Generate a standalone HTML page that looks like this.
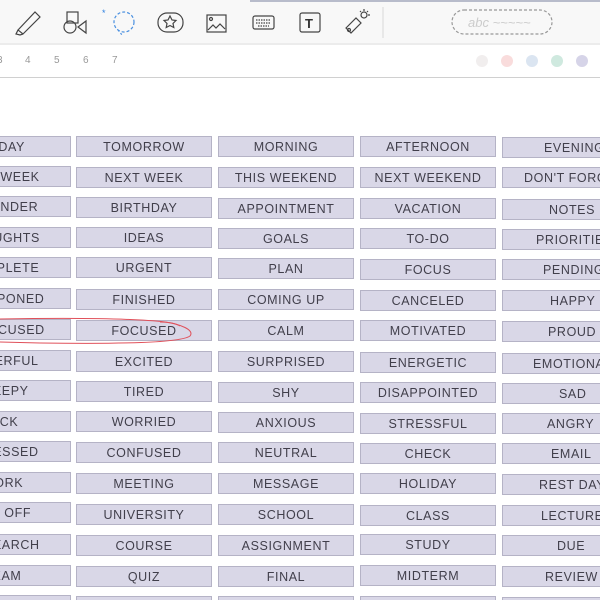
<!DOCTYPE html>
<html><head><meta charset="utf-8"><style>
html,body{margin:0;width:600px;height:600px;overflow:hidden}
body{background:#fff;font-family:"Liberation Sans",sans-serif}
#w{position:relative;width:600px;height:600px;overflow:hidden}
.tb{position:absolute;left:0;top:0;width:600px;height:43px;background:#f8f8f8;border-bottom:2px solid #ececec}
.topline{position:absolute;left:250px;top:0;width:350px;height:2px;background:#b8bccb}
.bar2{position:absolute;left:0;top:45px;width:600px;height:32px;background:#fff;border-bottom:1px solid #d0d0d0}
.num{position:absolute;top:55px;font-size:10px;color:#999}
.dot{position:absolute;top:55px;width:12px;height:12px;border-radius:50%}
.s{position:absolute;height:21px;width:134px;background:#d9d7e7;border:1px solid #b5b3c6;box-sizing:border-box;text-align:center;font-size:12.5px;line-height:20px;color:#413f4b;letter-spacing:0.6px;white-space:nowrap;overflow:hidden}
.c1{left:-66px;width:137px}.c2{left:76px;width:136px}.c3{left:218px;width:136px}.c4{left:360px;width:136px}.c5{left:502px;width:98px;border-right:none;text-align:left}
svg{position:absolute}
</style></head><body><div id="w">
<div class="tb"></div><div class="topline"></div>
<svg width="600" height="45" style="left:0;top:0" fill="none" stroke="#444" stroke-width="1.2">
<path d="M18 30 L35 12 L40 17 L23 34 Z M18 30 L16 34 L20 35 L23 34"/>
<rect x="67" y="12" width="11" height="11"/><circle cx="70" cy="27" r="6"/><path d="M86 21 L86 33 L78 27 Z"/>
<text x="102" y="16" font-size="9" fill="#2a7fe0" stroke="none">*</text><circle cx="124" cy="22" r="10" stroke="#4a90e0" stroke-dasharray="3 2"/><path d="M118 30 L122 35" stroke="#4a90e0" stroke-dasharray="2 2"/>
<rect x="158" y="13" width="25" height="19" rx="9"/><path d="M170 16 l2 4 4 .5 -3 3 .8 4 -3.8 -2 -3.8 2 .8 -4 -3 -3 4 -.5z"/>
<rect x="207" y="15" width="19" height="17"/><circle cx="211" cy="19" r="1.5"/><path d="M208 30 l5 -5 3 3 4 -4 5 5"/>
<rect x="253" y="16" width="21" height="13" rx="2"/><path d="M256 20h15M256 23h15M258 26h11" stroke-dasharray="1.5 1"/>
<rect x="300" y="13" width="20" height="19" rx="2"/><text x="305" y="28" font-size="13" font-weight="bold" fill="#333" stroke="none">T</text>
<path d="M346 28 l10 -10 5 5 -10 10 z"/><circle cx="349" cy="30" r="1.5"/><circle cx="364" cy="15" r="3"/><path d="M364 9v2M370 15h-2M368 11l-1 1M360 11l1 1"/>
<line x1="383" y1="7" x2="383" y2="38" stroke="#ddd"/>
<rect x="452" y="10" width="100" height="24" rx="12" stroke="#999" stroke-dasharray="3 2"/>
<text x="468" y="27" font-size="13" font-style="italic" fill="#ccc" stroke="none">abc ~~~~~</text>
</svg>
<div class="bar2"></div>
<span class="num" style="left:-3px">3</span><span class="num" style="left:25px">4</span><span class="num" style="left:54px">5</span><span class="num" style="left:83px">6</span><span class="num" style="left:112px">7</span>
<div class="dot" style="left:476px;background:#f1eeee"></div><div class="dot" style="left:501px;background:#f9dcdc"></div><div class="dot" style="left:526px;background:#dbe5f1"></div><div class="dot" style="left:551px;background:#cfe9df"></div><div class="dot" style="left:576px;background:#d6d4e8"></div>

<div class="s c1" style="top:136px">TODAY</div><div class="s c2" style="top:136px">TOMORROW</div><div class="s c3" style="top:136px">MORNING</div><div class="s c4" style="top:136px">AFTERNOON</div><div class="s c5" style="top:137px;padding-left:41px">EVENING</div>
<div class="s c1" style="top:166px">THIS WEEK</div><div class="s c2" style="top:167px">NEXT WEEK</div><div class="s c3" style="top:167px">THIS WEEKEND</div><div class="s c4" style="top:167px">NEXT WEEKEND</div><div class="s c5" style="top:167px;padding-left:21px">DON'T FORGET</div>
<div class="s c1" style="top:196px">REMINDER</div><div class="s c2" style="top:197px">BIRTHDAY</div><div class="s c3" style="top:198px">APPOINTMENT</div><div class="s c4" style="top:198px">VACATION</div><div class="s c5" style="top:199px;padding-left:46px">NOTES</div>
<div class="s c1" style="top:227px">THOUGHTS</div><div class="s c2" style="top:227px">IDEAS</div><div class="s c3" style="top:228px">GOALS</div><div class="s c4" style="top:228px">TO-DO</div><div class="s c5" style="top:229px;padding-left:33px">PRIORITIES</div>
<div class="s c1" style="top:257px">COMPLETE</div><div class="s c2" style="top:257px">URGENT</div><div class="s c3" style="top:258px">PLAN</div><div class="s c4" style="top:259px">FOCUS</div><div class="s c5" style="top:259px;padding-left:40px">PENDING</div>
<div class="s c1" style="top:288px">POSTPONED</div><div class="s c2" style="top:289px">FINISHED</div><div class="s c3" style="top:289px">COMING UP</div><div class="s c4" style="top:290px">CANCELED</div><div class="s c5" style="top:290px;padding-left:47px">HAPPY</div>
<div class="s c1" style="top:319px">UNFOCUSED</div><div class="s c2" style="top:320px">FOCUSED</div><div class="s c3" style="top:320px">CALM</div><div class="s c4" style="top:320px">MOTIVATED</div><div class="s c5" style="top:321px;padding-left:45px">PROUD</div>
<div class="s c1" style="top:350px">CHEERFUL</div><div class="s c2" style="top:351px">EXCITED</div><div class="s c3" style="top:351px">SURPRISED</div><div class="s c4" style="top:352px">ENERGETIC</div><div class="s c5" style="top:353px;padding-left:30px">EMOTIONAL</div>
<div class="s c1" style="top:380px">SLEEPY</div><div class="s c2" style="top:381px">TIRED</div><div class="s c3" style="top:382px">SHY</div><div class="s c4" style="top:382px">DISAPPOINTED</div><div class="s c5" style="top:383px;padding-left:56px">SAD</div>
<div class="s c1" style="top:411px">SICK</div><div class="s c2" style="top:411px">WORRIED</div><div class="s c3" style="top:412px">ANXIOUS</div><div class="s c4" style="top:413px">STRESSFUL</div><div class="s c5" style="top:413px;padding-left:44px">ANGRY</div>
<div class="s c1" style="top:441px">STRESSED</div><div class="s c2" style="top:442px">CONFUSED</div><div class="s c3" style="top:442px">NEUTRAL</div><div class="s c4" style="top:443px">CHECK</div><div class="s c5" style="top:443px;padding-left:48px">EMAIL</div>
<div class="s c1" style="top:472px">WORK</div><div class="s c2" style="top:473px">MEETING</div><div class="s c3" style="top:473px">MESSAGE</div><div class="s c4" style="top:473px">HOLIDAY</div><div class="s c5" style="top:474px;padding-left:36px">REST DAY</div>
<div class="s c1" style="top:502px">DAY OFF</div><div class="s c2" style="top:504px">UNIVERSITY</div><div class="s c3" style="top:504px">SCHOOL</div><div class="s c4" style="top:505px">CLASS</div><div class="s c5" style="top:505px;padding-left:38px">LECTURE</div>
<div class="s c1" style="top:534px">RESEARCH</div><div class="s c2" style="top:535px">COURSE</div><div class="s c3" style="top:535px">ASSIGNMENT</div><div class="s c4" style="top:534px">STUDY</div><div class="s c5" style="top:535px;padding-left:54px">DUE</div>
<div class="s c1" style="top:565px">EXAM</div><div class="s c2" style="top:566px">QUIZ</div><div class="s c3" style="top:566px">FINAL</div><div class="s c4" style="top:565px">MIDTERM</div><div class="s c5" style="top:566px;padding-left:42px">REVIEW</div>
<div class="s c1" style="top:595px"></div><div class="s c2" style="top:596px"></div><div class="s c3" style="top:596px"></div><div class="s c4" style="top:596px"></div><div class="s c5" style="top:597px"></div>
<svg width="600" height="600" style="left:0;top:0" fill="none">
<path d="M0 319 C60 318 130 318 165 322 C180 324 195 330 190 336 C180 343 120 344 40 343 L0 342" stroke="#e0505a" stroke-width="1"/>
<path d="M160 322 C168 322 175 323 180 326" stroke="#e0505a" stroke-width="1"/>
</svg>
</div></body></html>
